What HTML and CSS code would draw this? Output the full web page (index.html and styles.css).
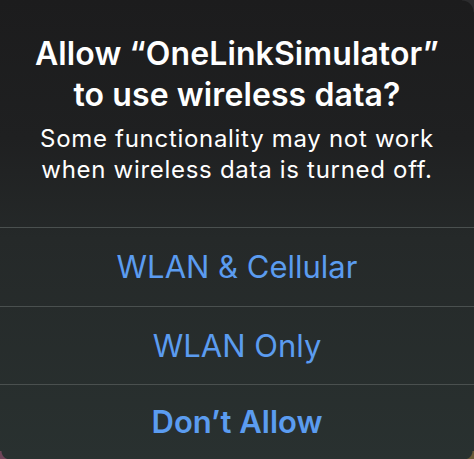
FILE: index.html
```html
<!DOCTYPE html>
<html>
<head>
<meta charset="utf-8">
<link rel="stylesheet" href="styles.css">
</head>
<body>
<div class="alert">
  <div class="header">
    <h1 class="title">Allow “OneLinkSimulator” to use wireless data?</h1>
    <p class="message">Some functionality may not work when wireless data is turned off.</p>
  </div>
  <div class="actions">
    <div class="action">WLAN &amp; Cellular</div>
    <div class="action">WLAN Only</div>
    <div class="action bold">Don’t Allow</div>
  </div>
  <span class="corner corner-tr"></span>
  <span class="corner corner-bl"></span>
  <span class="corner corner-br"></span>
</div>
</body>
</html>
```
FILE: styles.css
```css
html, body {
  margin: 0;
  padding: 0;
  background: #1c1c1e;
}
.alert {
  position: relative;
  width: 474px;
  height: 459px;
  overflow: hidden;
  background: linear-gradient(180deg, #1c1c1d 0%, #1f2021 30%, #252929 52%, #293130 100%);
  font-family: Inter, "Noto Sans", sans-serif;
  display: flex;
  flex-direction: column;
  -webkit-font-smoothing: antialiased;
}
.header {
  flex: 0 0 227px;
  height: 227px;
  box-sizing: border-box;
  padding: 33px 10px 0;
  text-align: center;
}
.title {
  margin: 0 auto;
  width: 420px;
  font-size: 32px;
  line-height: 41px;
  font-weight: 600;
  color: #ffffff;
  letter-spacing: 0.1px;
}
.message {
  margin: 8px auto 0;
  width: 440px;
  font-size: 24px;
  line-height: 31px;
  font-weight: 400;
  color: #ffffff;
  letter-spacing: 0.7px;
}
.actions {
  flex: 1 1 auto;
  display: flex;
  flex-direction: column;
}
.action {
  flex: 0 0 78.5px;
  box-sizing: border-box;
  border-top: 1px solid #4a504f;
  display: flex;
  align-items: center;
  justify-content: center;
  font-size: 31px;
  color: #5b9cf0;
}
.action.bold {
  flex: 1 1 auto;
  font-weight: 600;
  padding-bottom: 2px;
}
.corner {
  position: absolute;
  display: block;
}
.corner-tr {
  top: 0;
  right: 0;
  width: 12px;
  height: 12px;
  background: radial-gradient(circle at 0 100%, transparent 11px, #2c2c2e 12px);
}
.corner-bl {
  left: 0;
  bottom: 0;
  width: 10px;
  height: 8px;
  background: radial-gradient(circle at 100% 0, transparent 8px, #6e4458 9px);
}
.corner-br {
  right: 0;
  bottom: 0;
  width: 10px;
  height: 8px;
  background: radial-gradient(circle at 0 0, transparent 8px, #6b5a38 9px);
}
```
